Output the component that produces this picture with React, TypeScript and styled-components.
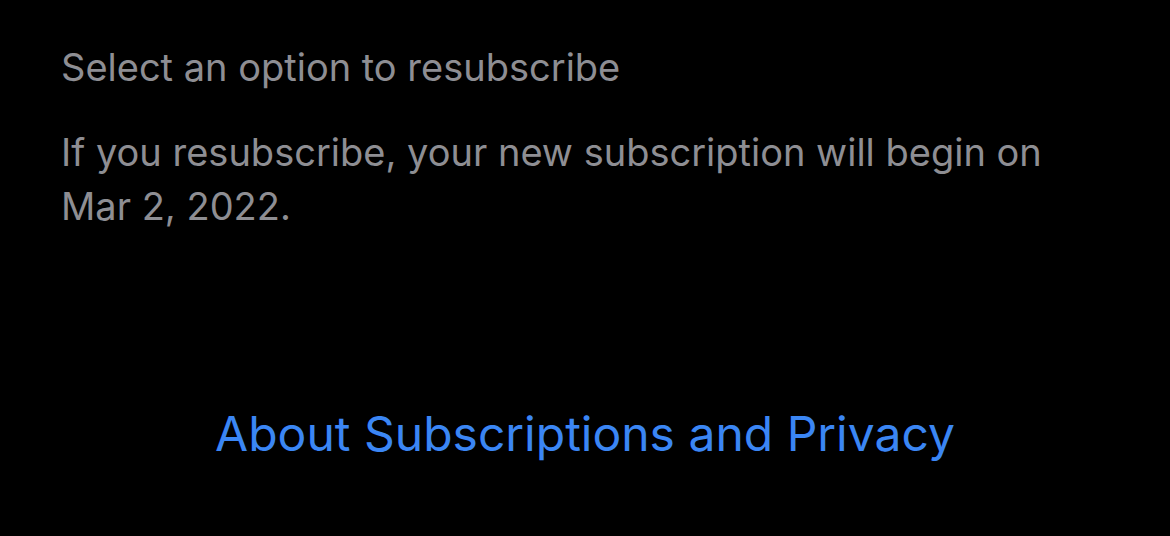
import styled, { createGlobalStyle } from "styled-components";

const GlobalStyle = createGlobalStyle`
  html, body {
    margin: 0;
    padding: 0;
    background: #000;
  }
  body {
    font-family: Inter, "Liberation Sans", sans-serif;
    -webkit-font-smoothing: antialiased;
  }
`;

const Screen = styled.main`
  width: 1170px;
  height: 536px;
  background: #000;
  display: flex;
  flex-direction: column;
  box-sizing: border-box;
  padding: 40px 61px 0 61px;
`;

const Note = styled.p<{ gap?: number }>`
  margin: 0 0 ${({ gap }) => gap ?? 0}px 0;
  font-size: 38px;
  line-height: 54px;
  color: #8e8e93;
`;

const LinkRow = styled.div`
  display: flex;
  justify-content: center;
  margin-top: 172px;
  margin-left: -61px;
  margin-right: -61px;
`;

const Link = styled.a`
  font-size: 48px;
  line-height: 58px;
  color: #3b86f4;
  text-decoration: none;
  cursor: pointer;
`;

export default function App() {
  return (
    <>
      <GlobalStyle />
      <Screen>
        <Note gap={31}>Select an option to resubscribe</Note>
        <Note>
          If you resubscribe, your new subscription will begin on
          <br />
          Mar 2, 2022.
        </Note>
        <LinkRow>
          <Link>About Subscriptions and Privacy</Link>
        </LinkRow>
      </Screen>
    </>
  );
}
